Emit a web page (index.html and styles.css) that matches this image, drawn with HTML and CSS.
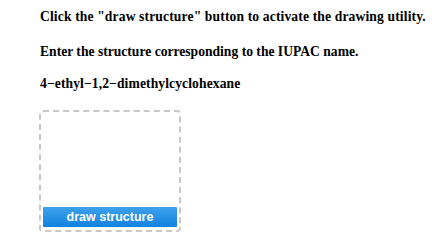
FILE: index.html
```html
<!DOCTYPE html>
<html lang="en">
<head>
    <meta charset="UTF-8">
    <title>Draw Structure</title>
    <link rel="stylesheet" href="styles.css">
</head>
<body>
    <div class="question">
        <p class="instructions">Click the "draw structure" button to activate the drawing utility.</p>
        <p class="prompt">Enter the structure corresponding to the IUPAC name.</p>
        <p class="compound">4&minus;ethyl&minus;1,2&minus;dimethylcyclohexane</p>

        <div class="draw-box">
            <button class="draw-button">draw structure</button>
        </div>
    </div>
</body>
</html>
```

FILE: styles.css
```css
body {
    margin: 0;
    background-color: #fff;
    font-family: "Liberation Serif", "Times New Roman", serif;
}

.question {
    padding: 8px 0 0 40px;
}

.question p {
    font-size: 13.6px;
    line-height: 17px;
    font-weight: bold;
    margin: 0;
    color: #000;
    white-space: nowrap;
}

.question .instructions {
    letter-spacing: 0.13px;
    margin-bottom: 18px;
}

.question .prompt {
    margin-bottom: 15px;
}

.question .compound {
    letter-spacing: 0.1px;
}

.draw-box {
    width: 134px;
    height: 115px;
    margin-top: 18px;
    margin-left: -1px;
    border: 2px dashed #c8c8c8;
    border-radius: 4px;
    display: flex;
    flex-direction: column;
    justify-content: flex-end;
    padding: 0 2px 3px 2px;
}

.draw-button {
    height: 20px;
    border: none;
    border-radius: 1px;
    background: linear-gradient(#3fa2ec, #1081e0);
    color: #fff;
    font-family: "Liberation Sans", Arial, sans-serif;
    font-weight: bold;
    font-size: 12.5px;
    padding: 0;
}
```
